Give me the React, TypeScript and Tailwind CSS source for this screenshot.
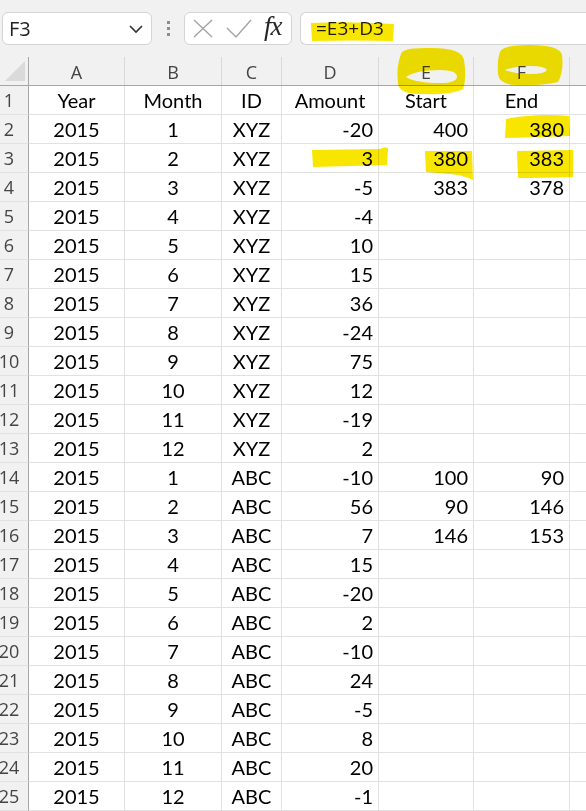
import React from 'react';

const cols = ['A', 'B', 'C', 'D', 'E', 'F', ''];

const rows: (string | number)[][] = [
  ['Year', 'Month', 'ID', 'Amount', 'Start', 'End'],
  [2015, 1, 'XYZ', -20, 400, 380],
  [2015, 2, 'XYZ', 3, 380, 383],
  [2015, 3, 'XYZ', -5, 383, 378],
  [2015, 4, 'XYZ', -4, '', ''],
  [2015, 5, 'XYZ', 10, '', ''],
  [2015, 6, 'XYZ', 15, '', ''],
  [2015, 7, 'XYZ', 36, '', ''],
  [2015, 8, 'XYZ', -24, '', ''],
  [2015, 9, 'XYZ', 75, '', ''],
  [2015, 10, 'XYZ', 12, '', ''],
  [2015, 11, 'XYZ', -19, '', ''],
  [2015, 12, 'XYZ', 2, '', ''],
  [2015, 1, 'ABC', -10, 100, 90],
  [2015, 2, 'ABC', 56, 90, 146],
  [2015, 3, 'ABC', 7, 146, 153],
  [2015, 4, 'ABC', 15, '', ''],
  [2015, 5, 'ABC', -20, '', ''],
  [2015, 6, 'ABC', 2, '', ''],
  [2015, 7, 'ABC', -10, '', ''],
  [2015, 8, 'ABC', 24, '', ''],
  [2015, 9, 'ABC', -5, '', ''],
  [2015, 10, 'ABC', 8, '', ''],
  [2015, 11, 'ABC', 20, '', ''],
  [2015, 12, 'ABC', -1, '', ''],
];

const gridCols = 'grid grid-cols-[39px_96px_97px_60px_97px_95px_96px_100px]';

function FormulaBar() {
  return (
    <div className="h-[57px] bg-[#f1f1f1] flex items-start pt-[12px] font-['Open_Sans',sans-serif]">
      {/* name box */}
      <div className="ml-[2px] w-[150px] h-[33px] bg-white border border-[#d4d4d4] rounded-[6px] flex items-center justify-between pl-[6px] pr-[6px]">
        <span className="text-[20px] text-[#1f1f1f] leading-none">F3</span>
        <svg width="16" height="10" viewBox="0 0 16 10" className="mr-[1px]">
          <path d="M2 2 L8 8 L14 2" fill="none" stroke="#333" strokeWidth="1.6" />
        </svg>
      </div>
      {/* grip dots */}
      <div className="w-[32px] h-[33px] flex flex-col items-center justify-center gap-[3px]">
        <span className="w-[3px] h-[3px] bg-[#8c8c8c]" />
        <span className="w-[3px] h-[3px] bg-[#8c8c8c]" />
        <span className="w-[3px] h-[3px] bg-[#8c8c8c]" />
      </div>
      {/* cancel / enter / fx */}
      <div className="w-[108px] h-[33px] bg-white border border-[#d4d4d4] rounded-[6px] flex items-center pl-[8px]">
        <svg width="20" height="20" viewBox="0 0 20 20">
          <path d="M1 1 L19 18 M19 1 L1 18" stroke="#a6a6a6" strokeWidth="1.5" fill="none" />
        </svg>
        <svg width="26" height="20" viewBox="0 0 26 20" className="ml-[13px]">
          <path d="M1 9 L10 18 L25 1" stroke="#a6a6a6" strokeWidth="1.5" fill="none" />
        </svg>
        <span className="ml-[12px] text-[27px] leading-none italic text-[#262626] font-['Liberation_Serif',serif] -mt-[4px] tracking-[-1px]">
          fx
        </span>
      </div>
      {/* formula input */}
      <div className="ml-[8px] flex-1 h-[33px] bg-white border border-[#d4d4d4] border-r-0 rounded-l-[6px] flex items-center pl-[15px]">
        <span className="text-[19px] text-[#1f1f1f] leading-none">=E3+D3</span>
      </div>
    </div>
  );
}

function HeaderRow() {
  return (
    <div className={`${gridCols} h-[29px] bg-[#f1f1f1] border-b border-[#a6a6a6] font-['Open_Sans',sans-serif]`}>
      <div className="border-r border-[#a6a6a6] flex items-end justify-end pr-[3px] pb-[4px]">
        <svg width="20" height="20" viewBox="0 0 20 20">
          <polygon points="20,0 20,20 0,20" fill="#dadada" />
        </svg>
      </div>
      {cols.map((c, i) => (
        <div
          key={i}
          className="border-r border-[#d9d9d9] flex items-center justify-center text-[18px] text-[#444] leading-none pt-[1px]"
        >
          {c}
        </div>
      ))}
    </div>
  );
}

function Row({ n, cells }: { n: number; cells: (string | number)[] }) {
  const isHeader = n === 1;
  return (
    <div className={`${gridCols} h-[29px]`}>
      <div className="bg-[#f1f1f1] border-r border-b border-r-[#a6a6a6] border-b-[#e1e1e1] flex items-center justify-center text-[18px] text-[#444] font-['Open_Sans',sans-serif] leading-none">
        {n}
      </div>
      {cells.map((v, i) => {
        const right = !isHeader && i >= 3;
        return (
          <div
            key={i}
            className={`border-r border-b border-[#e1e1e1] flex items-center text-[20px] text-black font-['Lato',sans-serif] leading-none ${
              right ? 'justify-end pr-[5px]' : 'justify-center'
            }`}
          >
            {v}
          </div>
        );
      })}
      <div className="border-b border-[#e1e1e1]" />
    </div>
  );
}

function Marker() {
  return (
    <svg
      className="absolute inset-0 pointer-events-none mix-blend-multiply"
      width="586"
      height="811"
      viewBox="0 0 586 811"
    >
      <g fill="#f8e600" fillRule="evenodd">
        {/* formula text */}
        <path d="M311 23 Q350 21 394 24 L393 41 Q352 40 312 41 Z" />
        {/* column E */}
        <path d="M401 54 Q402 47 432 48 Q462 48 464 60 Q467 78 463 89 Q452 95 425 94 Q400 95 398 84 Q396 66 401 54 Z M406 77 Q416 70 440 70 Q457 70 457 77 Q456 83 440 83 Q416 83 406 77 Z" />
        {/* column F */}
        <path d="M500 52 Q502 45 530 45 Q560 45 562 55 Q564 72 558 82 Q540 86 515 85 Q499 84 498 74 Q497 60 500 52 Z M505 70 Q515 66 530 66 Q545 66 547 70 Q545 74 530 74 Q515 74 505 70 Z" />
        {/* F2 */}
        <path d="M506 119 Q535 113 569 116 L570 136 Q540 137 505 138 Z" />
        {/* D3 */}
        <path d="M312 150 L380 149 Q388 145 388 150 L387 165 Q350 166 313 167 Z" />
        {/* E3 */}
        <path d="M425 151 L472 151 L473 180 Q463 175 450 174 L426 172 Z" />
        {/* F3 */}
        <path d="M517 151 L573 150 L573 177 Q545 178 518 178 Z" />
      </g>
    </svg>
  );
}

export default function App() {
  return (
    <div className="relative w-[586px] h-[811px] overflow-hidden bg-white">
      <FormulaBar />
      <div className="-ml-[10px]">
        <HeaderRow />
        {rows.map((r, i) => (
          <Row key={i} n={i + 1} cells={r} />
        ))}
      </div>
      <Marker />
    </div>
  );
}
